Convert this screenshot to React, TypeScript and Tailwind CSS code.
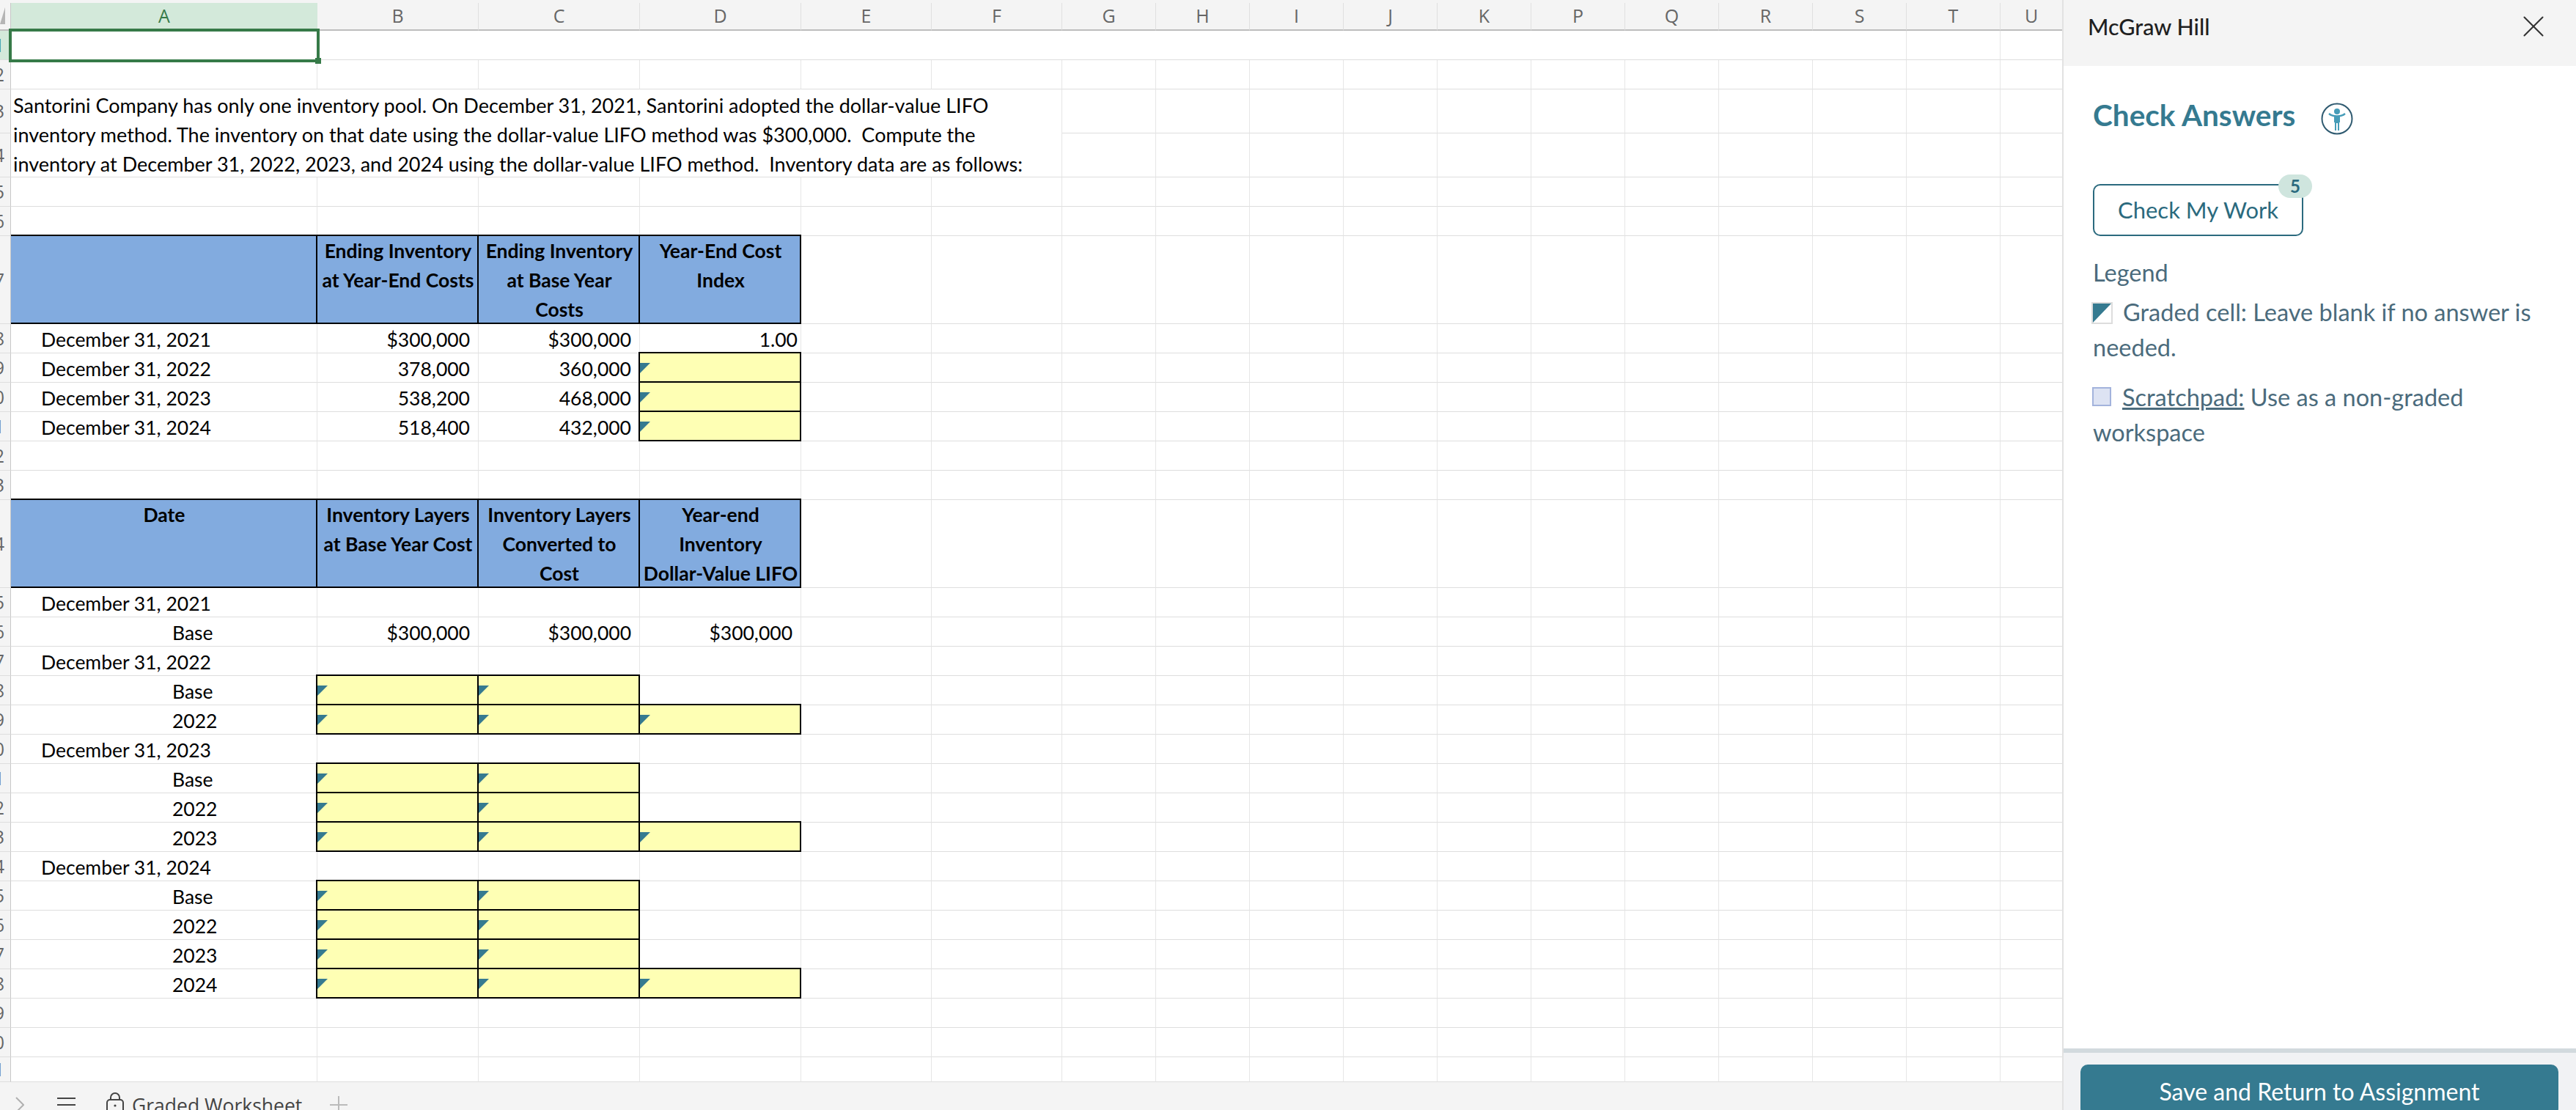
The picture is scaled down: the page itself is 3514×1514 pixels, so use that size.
import { X } from "lucide-react";

const CELL_FONT = "font-['Lato','Liberation_Sans',sans-serif]";
const UI_FONT = "font-['Lato','Open_Sans',sans-serif]";

const COLUMNS = ["A", "B", "C", "D", "E", "F", "G", "H", "I", "J", "K", "P", "Q", "R", "S", "T", "U"];
const EMPTY_COLUMNS = COLUMNS.slice(4);

// black box drawn on the two pixels before each cell edge, like the sheet's borders
const BOX =
  "shadow-[inset_0_-2px_0_#000,inset_-2px_0_0_#000,0_-2px_0_#000,-2px_0_0_#000,-2px_-2px_0_#000]";
const HEAD_A = "shadow-[inset_0_-2px_0_#000,inset_-2px_0_0_#000,0_-2px_0_#000]";

const GRID_LINES = "border-r border-b border-r-[#e6e6e6] border-b-[#dedede]";

type Row = { n: number; a?: string; sub?: boolean; b?: string; c?: string; d?: string };

// "?" marks a yellow graded cell
const TOP_ROWS: Row[] = [
  { n: 8, a: "December 31, 2021", b: "$300,000", c: "$300,000", d: "1.00" },
  { n: 9, a: "December 31, 2022", b: "378,000", c: "360,000", d: "?" },
  { n: 10, a: "December 31, 2023", b: "538,200", c: "468,000", d: "?" },
  { n: 11, a: "December 31, 2024", b: "518,400", c: "432,000", d: "?" },
  { n: 12 },
  { n: 13 },
];

const BOTTOM_ROWS: Row[] = [
  { n: 15, a: "December 31, 2021" },
  { n: 16, a: "Base", sub: true, b: "$300,000", c: "$300,000", d: "$300,000" },
  { n: 17, a: "December 31, 2022" },
  { n: 18, a: "Base", sub: true, b: "?", c: "?" },
  { n: 19, a: "2022", sub: true, b: "?", c: "?", d: "?" },
  { n: 20, a: "December 31, 2023" },
  { n: 21, a: "Base", sub: true, b: "?", c: "?" },
  { n: 22, a: "2022", sub: true, b: "?", c: "?" },
  { n: 23, a: "2023", sub: true, b: "?", c: "?", d: "?" },
  { n: 24, a: "December 31, 2024" },
  { n: 25, a: "Base", sub: true, b: "?", c: "?" },
  { n: 26, a: "2022", sub: true, b: "?", c: "?" },
  { n: 27, a: "2023", sub: true, b: "?", c: "?" },
  { n: 28, a: "2024", sub: true, b: "?", c: "?", d: "?" },
  { n: 29 },
  { n: 30 },
  { n: 31 },
];

function RowHead({ n, active }: { n: number; active?: boolean }) {
  return (
    <div
      className={`flex items-center justify-end overflow-hidden border-r border-b border-r-[#c8c8c8] border-b-[#dedede] pr-[8px] font-['Open_Sans',sans-serif] text-[25px] ${
        active ? "bg-[#d3e9da] text-[#367a48]" : "bg-[#f4f4f4] text-[#666666]"
      }`}
    >
      {n}
    </div>
  );
}

function Flag() {
  return <div className="h-3.5 w-3.5 bg-[#357a90] [clip-path:polygon(0_0,100%_0,0_100%)]" />;
}

function Value({ value, tight }: { value?: string; tight?: boolean }) {
  if (value === "?") {
    return (
      <div className={`bg-[#feffb4] pt-[13px] ${BOX}`}>
        <Flag />
      </div>
    );
  }
  return (
    <div
      className={`flex items-center justify-end whitespace-nowrap pt-1 ${GRID_LINES} ${tight ? "pr-[4px]" : "pr-[11px]"}`}
    >
      {value}
    </div>
  );
}

function DataRow({ row }: { row: Row }) {
  return (
    <>
      <RowHead n={row.n} />
      <div
        className={`flex items-center whitespace-nowrap pt-1 ${GRID_LINES} ${row.sub ? "pl-[220px]" : "pl-[41px]"}`}
      >
        {row.a}
      </div>
      <Value value={row.b} />
      <Value value={row.c} />
      <Value value={row.d} tight={row.d === "1.00"} />
      <EmptyCells />
    </>
  );
}

function EmptyCells({ from = 0 }: { from?: number }) {
  return (
    <>
      {EMPTY_COLUMNS.slice(from).map((c) => (
        <div key={c} className={GRID_LINES} />
      ))}
    </>
  );
}

function HeadCell({ lines, first }: { lines: string[]; first?: boolean }) {
  return (
    <div className={`bg-[#82abdf] text-center font-bold ${first ? HEAD_A : BOX}`}>
      {lines.map((l) => (
        <div key={l} className="h-10 whitespace-nowrap leading-10">
          {l}
        </div>
      ))}
    </div>
  );
}

function Sheet() {
  return (
    <div
      className={`grid flex-none grid-cols-[15px_418px_220px_220px_220px_178px_178px_128px_128px_128px_128px_128px_128px_128px_128px_128px_128px_85px] grid-rows-[38px_40px_40px_60px_60px_40px_40px_120px_repeat(6,40px)_120px_repeat(16,40px)_34px] ${CELL_FONT} text-[26.5px] text-black`}
    >
      {/* column letters */}
      <div className="flex items-start justify-start border-r border-b-2 border-r-[#c8c8c8] border-b-[#bdbdbd] bg-[#f4f4f4] pt-[6px]">
        <div className="h-[23px] w-[7px] bg-[#b5b5b5] [clip-path:polygon(100%_0,100%_100%,0_100%)]" />
      </div>
      {COLUMNS.map((c) => (
        <div
          key={c}
          className={`flex items-center justify-center border-b-2 border-b-[#bdbdbd] font-['Open_Sans',sans-serif] text-[25px] ${
            c === "A" ? "bg-[#d3e9da] text-[#367a48]" : "border-r border-r-[#e0e0e0] bg-[#f4f4f4] text-[#666666]"
          }`}
        >
          {c}
        </div>
      ))}

      {/* row 1: A selected, B to S merged */}
      <RowHead n={1} active />
      <div className="relative outline-4 -outline-offset-1 outline-[#367a48]">
        <div className="absolute -right-[5px] -bottom-[5px] h-2 w-2 bg-[#367a48]" />
      </div>
      <div className={`col-span-14 ${GRID_LINES}`} />
      <div className={GRID_LINES} />
      <div className={GRID_LINES} />

      {/* row 2 */}
      <RowHead n={2} />
      <div className={GRID_LINES} />
      <div className={GRID_LINES} />
      <div className={GRID_LINES} />
      <div className={GRID_LINES} />
      <EmptyCells />

      {/* rows 3 and 4: problem text */}
      <RowHead n={3} />
      <div className={`col-span-6 row-span-2 whitespace-pre pl-[3px] pt-[2px] text-[27px] leading-10 ${GRID_LINES}`}>
        <div>Santorini Company has only one inventory pool. On December 31, 2021, Santorini adopted the dollar-value LIFO</div>
        <div>inventory method. The inventory on that date using the dollar-value LIFO method was $300,000.  Compute the</div>
        <div>inventory at December 31, 2022, 2023, and 2024 using the dollar-value LIFO method.  Inventory data are as follows:</div>
      </div>
      <EmptyCells from={2} />
      <RowHead n={4} />
      <EmptyCells from={2} />

      {[5, 6].map((n) => (
        <DataRow key={n} row={{ n }} />
      ))}

      {/* first table */}
      <RowHead n={7} />
      <HeadCell lines={[]} first />
      <HeadCell lines={["Ending Inventory", "at Year-End Costs"]} />
      <HeadCell lines={["Ending Inventory", "at Base Year", "Costs"]} />
      <HeadCell lines={["Year-End Cost", "Index"]} />
      <EmptyCells />
      {TOP_ROWS.map((row) => (
        <DataRow key={row.n} row={row} />
      ))}

      {/* second table */}
      <RowHead n={14} />
      <HeadCell lines={["Date"]} first />
      <HeadCell lines={["Inventory Layers", "at Base Year Cost"]} />
      <HeadCell lines={["Inventory Layers", "Converted to", "Cost"]} />
      <HeadCell lines={["Year-end", "Inventory", "Dollar-Value LIFO"]} />
      <EmptyCells />
      {BOTTOM_ROWS.map((row) => (
        <DataRow key={row.n} row={row} />
      ))}
    </div>
  );
}

function TabBar() {
  return (
    <div className="flex h-[38px] flex-none items-start overflow-hidden bg-[#f4f4f4] font-['Open_Sans',sans-serif] text-[26.5px] leading-[40px] text-[#444444]">
      <svg className="ml-[21px] mt-[20px] flex-none" width="12" height="22" viewBox="0 0 12 22" fill="none" stroke="#b0b0b0" strokeWidth="2">
        <path d="M1 1l10 10L1 21" />
      </svg>
      <div className="ml-[45px] mt-[21px] flex h-[11px] w-[25px] flex-none flex-col justify-between">
        <div className="h-0.5 bg-[#444444]" />
        <div className="h-0.5 bg-[#444444]" />
      </div>
      <svg className="ml-[41px] mt-[14px] flex-none" width="26" height="36" viewBox="0 0 26 36" fill="none" stroke="#444444" strokeWidth="2">
        <rect x="2" y="10" width="22" height="25" rx="4" />
        <path d="M7 10V7a6 6 0 0 1 12 0v3" />
        <circle cx="13" cy="18" r="1.6" fill="#444444" stroke="none" />
      </svg>
      <div className="ml-[10px] mt-[12px] whitespace-nowrap">Graded Worksheet</div>
      <svg className="ml-[38px] mt-[19px] flex-none" width="24" height="24" viewBox="0 0 24 24" fill="none" stroke="#bbbbbb" strokeWidth="2">
        <path d="M12 0v24M0 12h24" />
      </svg>
    </div>
  );
}

function AccessIcon() {
  return (
    <svg className="ml-[35px] mt-[7px] flex-none" width="44" height="44" viewBox="0 0 44 44" fill="none">
      <circle cx="22" cy="22" r="20.5" stroke="#2f5a70" strokeWidth="2" />
      <circle cx="22" cy="12" r="4" fill="#459cb8" />
      <path d="M11 15c3 2.5 6 3.5 11 3.5s8-1 11-3.5" stroke="#459cb8" strokeWidth="2.4" />
      <path d="M18 18h8v9h-1v11h-2V28h-2v10h-2V27h-1z" fill="#459cb8" />
    </svg>
  );
}

function Panel() {
  return (
    <aside className={`flex w-[701px] flex-none flex-col border-l-2 border-l-[#e2e2e2] bg-white ${UI_FONT}`}>
      <header className="flex h-[90px] flex-none items-start justify-between bg-[#f4f4f4] pl-[33px] pr-[33px] pt-[15px]">
        <span className="text-[30.5px] font-medium leading-[42px] text-[#1f1f1f]">McGraw Hill</span>
        <X className="-mt-[4px]" size={50} strokeWidth={1} color="#333333" />
      </header>

      <div className="flex-1 pl-[40px] pr-[30px]">
        <div className="mt-[43px] flex items-start">
          <h1 className="text-[40.5px] font-bold leading-[48px] text-[#357a90]">Check Answers</h1>
          <AccessIcon />
        </div>

        <button className="relative mt-[67px] block h-[71px] w-[287px] rounded-[10px] border-2 border-[#2b6a7e] pb-px text-[31px] text-[#2b6a7e]">
          Check My Work
          <span className="absolute -right-[14px] -top-[15px] h-8 w-[46px] rounded-2xl bg-[#cfe5de] text-center text-[24px] font-bold leading-8">
            5
          </span>
        </button>

        <div className="mt-[26px] text-[32.5px] leading-[48px] text-[#4b6b7c]">
          <div>Legend</div>
          <p className="mt-[6px]">
            <span className="-ml-[2px] mr-[14px] inline-block h-[30px] w-[29px] border-2 border-[#dddddd] bg-white align-[-4px]">
              <span className="block h-full w-full bg-[#357a90] [clip-path:polygon(0_0,100%_0,0_100%)]" />
            </span>
            Graded cell: Leave blank if no answer is needed.
          </p>
          <p className="mt-[20px]">
            <span className="-ml-px mr-[15px] inline-block h-[26px] w-[26px] border-2 border-[#a3b3dc] bg-[#dde3f3] align-[0px]" />
            <span className="underline">Scratchpad:</span> Use as a non-graded workspace
          </p>
        </div>
      </div>

      <footer className="h-[84px] flex-none overflow-hidden border-t-[6px] border-t-[#d2dade] bg-[#f1f2f4] pl-[23px] pr-[24px] pt-4">
        <button className="block h-[70px] w-full rounded-[10px] bg-[#357a90] pt-1 text-[32px] text-white">
          Save and Return to Assignment
        </button>
      </footer>
    </aside>
  );
}

export default function App() {
  return (
    <div className="flex h-[1514px] w-[3514px] overflow-hidden bg-white">
      <main className="flex w-[2813px] flex-none flex-col">
        <div className="flex flex-1 flex-col overflow-hidden pt-1 [background:linear-gradient(#f4f4f4_4px,white_4px)]">
          <Sheet />
        </div>
        <TabBar />
      </main>
      <Panel />
    </div>
  );
}
